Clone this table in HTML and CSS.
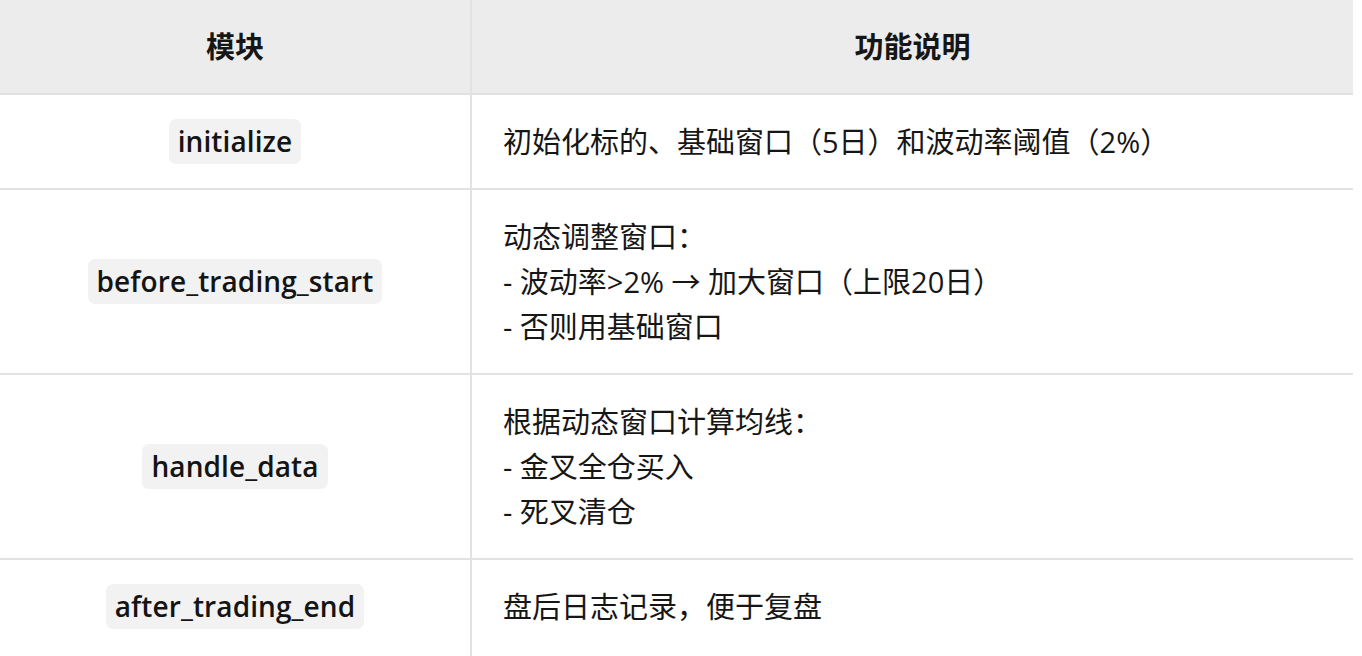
FILE: index.html
```html
<!DOCTYPE html>
<html lang="zh-CN">
<head>
<meta charset="utf-8">
<title>模块说明</title>
<link rel="stylesheet" href="styles.css">
</head>
<body>
<table class="spec">
  <thead>
    <tr>
      <th class="col-mod">模块</th>
      <th class="col-desc">功能说明</th>
    </tr>
  </thead>
  <tbody>
    <tr>
      <td class="col-mod"><code class="pill">initialize</code></td>
      <td class="col-desc">初始化标的、基础窗口（5日）和波动率阈值（2%）</td>
    </tr>
    <tr>
      <td class="col-mod"><code class="pill">before_trading_start</code></td>
      <td class="col-desc">动态调整窗口：<br>- 波动率&gt;2% → 加大窗口（上限20日）<br>- 否则用基础窗口</td>
    </tr>
    <tr>
      <td class="col-mod"><code class="pill">handle_data</code></td>
      <td class="col-desc">根据动态窗口计算均线：<br>- 金叉全仓买入<br>- 死叉清仓</td>
    </tr>
    <tr class="last">
      <td class="col-mod"><code class="pill">after_trading_end</code></td>
      <td class="col-desc">盘后日志记录，便于复盘</td>
    </tr>
  </tbody>
</table>
</body>
</html>
```

FILE: styles.css
```css
html, body {
  margin: 0;
  padding: 0;
  background: #ffffff;
}

body {
  font-family: "Open Sans", "Noto Sans CJK SC", sans-serif;
  font-size: 29px;
  line-height: 45px;
  color: #161616;
  text-spacing-trim: space-all;
}

.spec {
  width: 1353px;
  border-collapse: collapse;
  table-layout: fixed;
}

.spec th,
.spec td {
  padding: 24px 31px;
  vertical-align: middle;
  border-bottom: 2px solid #e2e2e2;
  line-height: 45px;
}

.spec .last td {
  border-bottom: none;
  padding-bottom: 30px;
}

.spec .col-mod {
  width: 471px;
  box-sizing: border-box;
  text-align: center;
  border-right: 2px solid #e2e2e2;
  padding-left: 0;
  padding-right: 0;
}

.spec thead th {
  background: #ececec;
  font-weight: 700;
  text-align: center;
  height: 45px;
}

.spec td.col-desc {
  text-align: left;
}

.pill {
  display: inline-block;
  vertical-align: top;
  font-family: "Open Sans", "Noto Sans", sans-serif;
  font-size: 28px;
  font-weight: 600;
  line-height: 45px;
  letter-spacing: 0.1px;
  padding: 0 9px;
  background: #f2f2f2;
  border-radius: 7px;
  color: #141414;
}
```
